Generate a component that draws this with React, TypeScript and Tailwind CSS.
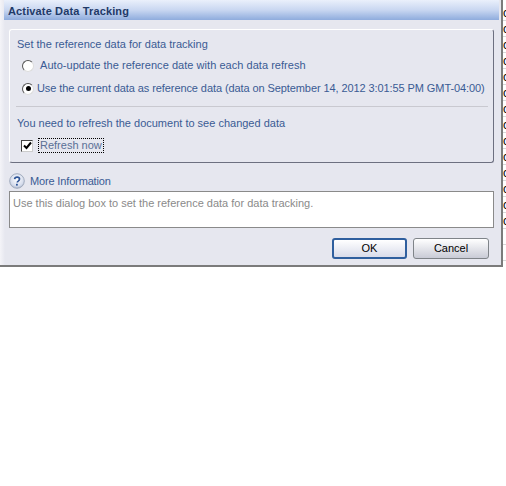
const stripRows = Array.from({ length: 14 });

function Radio({ checked }: { checked?: boolean }) {
  return (
    <span className="flex h-[12px] w-[12px] shrink-0 items-center justify-center rounded-full border border-t-[#555] border-l-[#555] border-r-[#ddd] border-b-[#ddd] bg-white">
      {checked && <span className="h-[5px] w-[5px] rounded-full bg-black" />}
    </span>
  );
}

function HelpIcon() {
  return (
    <svg width="16" height="16" viewBox="0 0 16 16" className="shrink-0">
      <defs>
        <radialGradient id="help" cx="50%" cy="40%" r="65%">
          <stop offset="0%" stopColor="#ffffff" />
          <stop offset="70%" stopColor="#d5dcec" />
          <stop offset="100%" stopColor="#9aa6bd" />
        </radialGradient>
      </defs>
      <circle cx="8" cy="8" r="7.3" fill="url(#help)" stroke="#a3adbf" strokeWidth="1" />
      <path d="M5.6 6.1c.2-1.4 1.2-2 2.5-2 1.400 0 2.400.8 2.400 2 0 1-.6 1.500-1.300 2-.6.4-.9.8-.9 1.500" fill="none" stroke="#2f5597" strokeWidth="1.700" />
      <rect x="7" y="10.800" width="1.800" height="1.800" fill="#2f5597" />
    </svg>
  );
}

export default function App() {
  return (
    <div className="flex h-[486px] w-[506px] items-start overflow-hidden bg-white font-['Liberation_Sans',Arial,sans-serif] text-[11px] leading-[13px] text-[#3a5b94]">
      <div className="flex h-[267px] w-[503px] shrink-0 flex-col border-r-2 border-b-2 border-[#7b7b7b] bg-[linear-gradient(to_right,#f4f4f8,#e6e7ef_5px)]">
        <div className="mr-[2px] ml-[4px] flex h-[20px] items-center bg-gradient-to-b from-[#eaf0fb] via-[#c9d7f1] to-[#8facdd] pt-[3px] pl-[4px] text-[11px] font-bold tracking-[0.14px] text-[#1f3a68]">
          Activate Data Tracking
        </div>
        <div className="mt-[9px] ml-[9px] h-[134px] w-[485px] rounded-[3px] border border-t-white border-l-white border-r-[#6d7080] border-b-[#6d7080] pt-[8px] pl-[7px]">
          <div>Set the reference data for data tracking</div>
          <div className="mt-[8px] ml-[5px] flex items-center gap-[6px]">
            <Radio />
            <span className="tracking-[0.04px]">Auto-update the reference date with each data refresh</span>
          </div>
          <div className="mt-[10px] ml-[5px] flex items-center gap-[3px]">
            <Radio checked />
            <span className="whitespace-nowrap tracking-[-0.09px]">Use the current data as reference data (data on September 14, 2012 3:01:55 PM GMT-04:00)</span>
          </div>
          <div className="mt-[11px] mr-[5px] ml-[-1px] h-px bg-[#c9c9d0]" />
          <div className="mt-[10px]">You need to refresh the document to see changed data</div>
          <div className="mt-[8px] ml-[4px] flex items-center gap-[5px]">
            <span className="flex h-[12px] w-[12px] shrink-0 items-center justify-center border border-t-[#444] border-l-[#444] border-r-[#ccc] border-b-[#ccc] bg-white">
              <svg width="9" height="9" viewBox="0 0 9 9">
                <path d="M1 4.500 3.500 7 8 1.500" fill="none" stroke="#000" strokeWidth="2" />
              </svg>
            </span>
            <span className="border border-dotted border-black px-px text-[#5a6f96]">Refresh now</span>
          </div>
        </div>
        <div className="mt-[9px] ml-[9px] flex h-[18px] items-center gap-[5px]">
          <HelpIcon />
          <span className="tracking-[-0.15px]">More Information</span>
        </div>
        <div className="mt-[1px] ml-[9px] h-[37px] w-[485px] border border-[#8a8a8a] bg-white px-[3px] pt-[5px] text-[#8a8a8a]">
          Use this dialog box to set the reference data for data tracking.
        </div>
        <div className="mt-[10px] mr-[12px] flex justify-end gap-[6px]">
          <button className="h-[21px] w-[75px] rounded-[3px] border-2 border-[#2f5f9e] bg-gradient-to-b from-white to-[#d9dcea] text-[11px] text-black">
            OK
          </button>
          <button className="h-[21px] w-[76px] rounded-[3px] border border-[#7f8489] bg-gradient-to-b from-white to-[#c9cbd6] text-[11px] text-black">
            Cancel
          </button>
        </div>
      </div>
      <div className="h-[267px] w-[3px] shrink-0 overflow-hidden">
        <div className="h-[5px]" />
        {stripRows.map((_, i) => (
          <div key={i} className="flex h-[16px] items-center overflow-hidden border-b border-[#d8d8d8] text-[12px] leading-none text-black">
            c
          </div>
        ))}
        <div className="h-[16px] border-b border-[#d8d8d8]" />
        <div className="h-[16px] border-b border-[#d8d8d8]" />
      </div>
    </div>
  );
}
